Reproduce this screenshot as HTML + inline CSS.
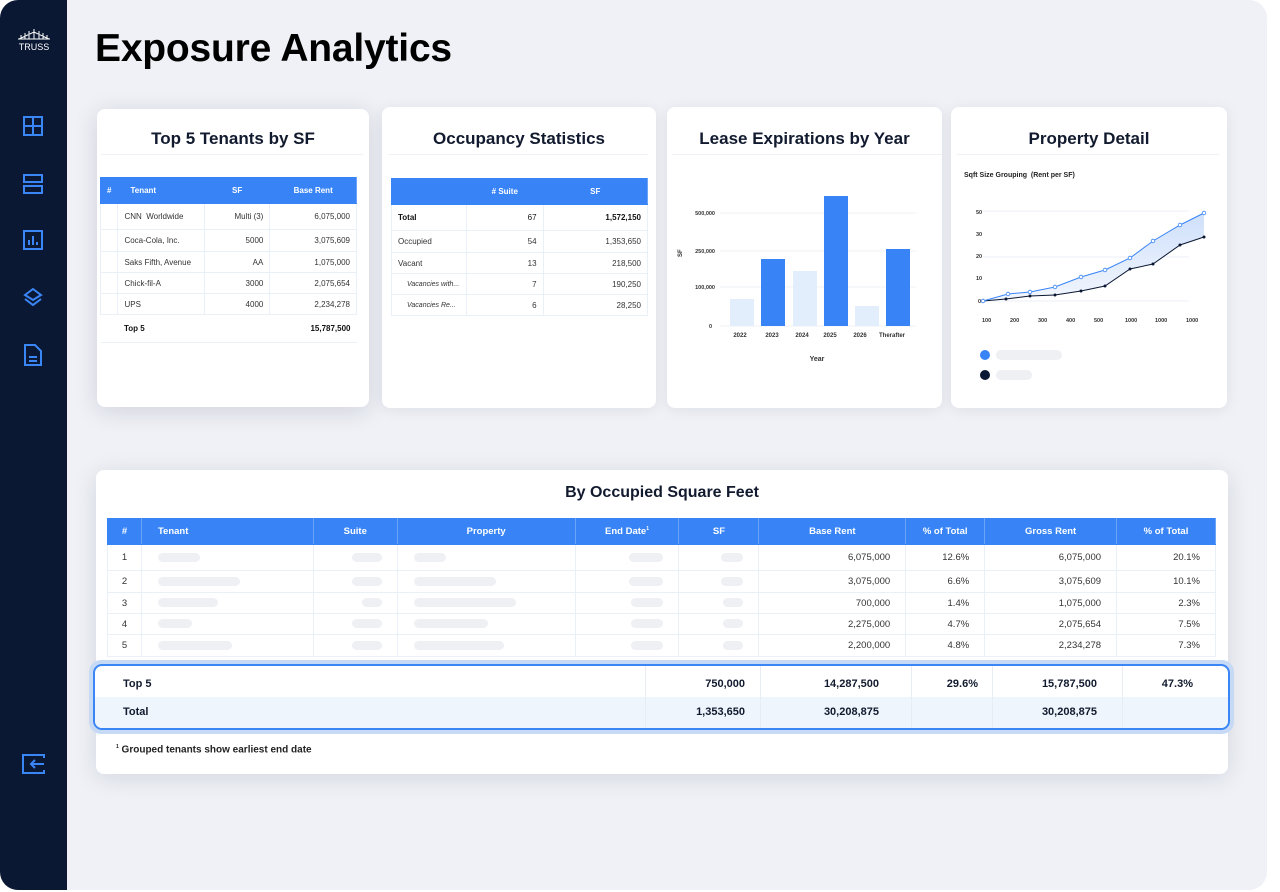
<!DOCTYPE html>
<html><head><meta charset="utf-8"><style>
*{margin:0;padding:0;box-sizing:border-box}
body{width:1280px;height:892px;background:#fff;font-family:"Liberation Sans",sans-serif;color:#0f1a2e;position:relative;overflow:hidden}
.abs{position:absolute}
#main{left:0;top:0;width:1267px;height:890px;background:#eff1f6;border-radius:18px}
#side{left:0;top:0;width:67px;height:890px;background:#0b1833;border-radius:18px 0 0 18px}
.card{position:absolute;background:#fff;border-radius:8px;box-shadow:0 2px 14px rgba(20,30,60,.08)}
.ct{position:absolute;left:0;right:0;text-align:center;font-weight:bold;font-size:17px;color:#111a2e}
.hr{position:absolute;height:1px;background:#eef2f8}
table{border-collapse:collapse;position:absolute;font-size:8px;color:#333}
td,th{border:1px solid #eaf0f8;padding:0 6px;white-space:nowrap}
th{background:#3884f6;color:#fff;font-weight:bold;border-color:#3884f6;border-right:1px solid #6aa3f8}
.r{text-align:right}.c{text-align:center}
.pill{display:inline-block;height:9px;border-radius:5px;background:#eef0f4;vertical-align:middle}
</style></head><body>
<div id="main" class="abs"></div>
<div id="side" class="abs">
  <svg class="abs" style="left:17px;top:28px" width="34" height="24" viewBox="0 0 34 24">
    <g fill="none" stroke="#fff" stroke-width="1"><path d="M2 11 L17 4 L32 11 M4 11 V7 M8 11V5 M12 11V3 M17 11V1 M22 11V3 M26 11V5 M30 11V7 M1 11H33"/></g>
    <text x="17" y="22" fill="#fff" font-size="9" text-anchor="middle" font-family="Liberation Sans">TRUSS</text>
  </svg>
  <svg class="abs" style="left:23px;top:116px" width="20" height="20" viewBox="0 0 20 20" fill="none" stroke="#3a86f7" stroke-width="2"><rect x="1" y="1" width="18" height="18"/><path d="M10 1V19M1 10H19"/></svg>
  <svg class="abs" style="left:23px;top:174px" width="20" height="20" viewBox="0 0 20 20" fill="none" stroke="#3a86f7" stroke-width="2"><rect x="1" y="1" width="18" height="7"/><rect x="1" y="12" width="18" height="7"/></svg>
  <svg class="abs" style="left:23px;top:230px" width="20" height="20" viewBox="0 0 20 20" fill="none" stroke="#3a86f7" stroke-width="2"><rect x="1" y="1" width="18" height="18"/><path d="M6 15V10M10 15V6M14 15V12"/></svg>
  <svg class="abs" style="left:23px;top:287px" width="20" height="20" viewBox="0 0 20 20" fill="none" stroke="#3a86f7" stroke-width="2"><path d="M10 2L18 8L10 13L2 8Z"/><path d="M2 12L10 18L18 12"/></svg>
  <svg class="abs" style="left:24px;top:344px" width="18" height="22" viewBox="0 0 18 22" fill="none" stroke="#3a86f7" stroke-width="2"><path d="M1 1H11L17 7V21H1Z"/><path d="M5 13H13M5 17H13"/></svg>
  <svg class="abs" style="left:22px;top:754px" width="24" height="20" viewBox="0 0 24 20" fill="none" stroke="#3a86f7" stroke-width="2"><path d="M22 4V1H1V19H22V16"/><path d="M22 10H9M13 6L9 10L13 14"/></svg>
</div>
<div class="abs" style="left:95px;top:27px;font-size:39px;font-weight:bold;color:#000;letter-spacing:-0.2px">Exposure Analytics</div>

<div class="card" style="left:97px;top:109px;width:272px;height:298px;box-shadow:0 4px 24px rgba(20,30,60,.14)">
  <div class="ct" style="top:20px">Top 5 Tenants by SF</div>
  <div class="hr" style="left:4px;right:6px;top:45px"></div>
  <table style="left:3px;top:68px;width:257px">
    <tr style="height:26px"><th style="width:14px;border-right:0">#</th><th style="text-align:left;width:87px;border-right:0;padding-left:12px">Tenant</th><th style="width:67px;border-right:0">SF</th><th style="width:89px">Base Rent</th></tr>
    <tr style="height:26px"><td></td><td>CNN&nbsp; Worldwide</td><td class="r">Multi (3)</td><td class="r">6,075,000</td></tr>
    <tr style="height:22px"><td></td><td>Coca-Cola, Inc.</td><td class="r">5000</td><td class="r">3,075,609</td></tr>
    <tr style="height:21px"><td></td><td>Saks Fifth, Avenue</td><td class="r">AA</td><td class="r">1,075,000</td></tr>
    <tr style="height:21px"><td></td><td>Chick-fil-A</td><td class="r">3000</td><td class="r">2,075,654</td></tr>
    <tr style="height:21px"><td></td><td>UPS</td><td class="r">4000</td><td class="r">2,234,278</td></tr>
    <tr style="height:28px;font-weight:bold;color:#111"><td style="border:0;border-bottom:1px solid #eaf0f8"></td><td style="border:0;border-bottom:1px solid #eaf0f8">Top 5</td><td style="border:0;border-bottom:1px solid #eaf0f8"></td><td class="r" style="border:0;border-bottom:1px solid #eaf0f8">15,787,500</td></tr>
  </table>
</div>

<div class="card" style="left:382px;top:107px;width:274px;height:301px">
  <div class="ct" style="top:22px">Occupancy Statistics</div>
  <div class="hr" style="left:6px;right:8px;top:47px"></div>
  <table style="left:9px;top:71px;width:257px">
    <tr style="height:26px"><th style="width:75px;border-right:0"></th><th style="width:77px;border-right:0"># Suite</th><th style="width:105px">SF</th></tr>
    <tr style="height:26px;font-weight:bold;color:#111"><td>Total</td><td class="r" style="font-weight:normal">67</td><td class="r">1,572,150</td></tr>
    <tr style="height:22px"><td>Occupied</td><td class="r">54</td><td class="r">1,353,650</td></tr>
    <tr style="height:21px"><td>Vacant</td><td class="r">13</td><td class="r">218,500</td></tr>
    <tr style="height:21px;font-style:italic"><td style="padding-left:15px;font-size:7px">Vacancies with...</td><td class="r" style="font-style:normal">7</td><td class="r" style="font-style:normal">190,250</td></tr>
    <tr style="height:21px;font-style:italic"><td style="padding-left:15px;font-size:7px">Vacancies Re...</td><td class="r" style="font-style:normal">6</td><td class="r" style="font-style:normal">28,250</td></tr>
  </table>
</div>

<div class="card" style="left:667px;top:107px;width:275px;height:301px">
  <div class="ct" style="top:22px">Lease Expirations by Year</div>
  <div class="hr" style="left:5px;right:0;top:47px"></div>
  <svg class="abs" style="left:0;top:0" width="275" height="301">
    <g stroke="#eef1f6" stroke-width="1"><path d="M53 106H249M53 144H249M53 180H249M53 219H249"/></g>
    <g font-size="5.5" font-weight="bold" fill="#333" font-family="Liberation Sans" text-anchor="end">
      <text x="48" y="108">500,000</text><text x="48" y="146">250,000</text><text x="48" y="182">100,000</text><text x="45" y="221">0</text>
    </g>
    <text x="0" y="0" font-size="6" font-weight="bold" fill="#333" font-family="Liberation Sans" transform="translate(15,150) rotate(-90)">SF</text>
    <rect x="63" y="192" width="24" height="27" fill="#e2eefc"/>
    <rect x="94" y="152" width="24" height="67" fill="#3884f6"/>
    <rect x="126" y="164" width="24" height="55" fill="#e2eefc"/>
    <rect x="157" y="89" width="24" height="130" fill="#3884f6"/>
    <rect x="188" y="199" width="24" height="20" fill="#e2eefc"/>
    <rect x="219" y="142" width="24" height="77" fill="#3884f6"/>
    <g font-size="6" font-weight="bold" fill="#333" font-family="Liberation Sans" text-anchor="middle">
      <text x="73" y="230">2022</text><text x="105" y="230">2023</text><text x="135" y="230">2024</text><text x="163" y="230">2025</text><text x="193" y="230">2026</text><text x="225" y="230">Therafter</text>
      <text x="150" y="254" font-size="7">Year</text>
    </g>
  </svg>
</div>

<div class="card" style="left:951px;top:107px;width:276px;height:301px">
  <div class="ct" style="top:22px">Property Detail</div>
  <div class="hr" style="left:6px;right:8px;top:47px"></div>
  <div class="abs" style="left:13px;top:65px;font-size:7px;font-weight:bold;color:#222">Sqft Size Grouping&nbsp; (Rent per SF)</div>
  <svg class="abs" style="left:0;top:0" width="276" height="301">
    <defs><linearGradient id="g" x1="0" y1="0" x2="0" y2="1"><stop offset="0" stop-color="#cfe0fb"/><stop offset="1" stop-color="#f2f6fd"/></linearGradient></defs>
    <g stroke="#f0f2f6" stroke-width="1.2"><path d="M32 104H238M32 150H238M32 194H238"/></g>
    <g font-size="5.5" font-weight="bold" fill="#333" font-family="Liberation Sans">
      <text x="25" y="107">50</text><text x="25" y="129">30</text><text x="25" y="151">20</text><text x="25" y="173">10</text><text x="27" y="196">0</text>
      <text x="31" y="215">100</text><text x="59" y="215">200</text><text x="87" y="215">300</text><text x="115" y="215">400</text><text x="143" y="215">500</text><text x="174" y="215">1000</text><text x="204" y="215">1000</text><text x="235" y="215">1000</text>
    </g>
    <path d="M32 194L57 187L79 185L104 180L130 170L154 163L179 151L202 134L229 118L253 106L253 130L229 138L202 157L179 162L154 179L130 184L104 188L79 189L55 192Z" fill="url(#g)"/>
    <polyline points="32,194 55,192 79,189 104,188 130,184 154,179 179,162 202,157 229,138 253,130" fill="none" stroke="#0b1833" stroke-width="1"/>
    <g fill="#0b1833"><circle cx="55" cy="192" r="1.5"/><circle cx="79" cy="189" r="1.5"/><circle cx="104" cy="188" r="1.5"/><circle cx="130" cy="184" r="1.5"/><circle cx="154" cy="179" r="1.5"/><circle cx="179" cy="162" r="1.5"/><circle cx="202" cy="157" r="1.5"/><circle cx="229" cy="138" r="1.5"/><circle cx="253" cy="130" r="1.5"/></g>
    <polyline points="32,194 57,187 79,185 104,180 130,170 154,163 179,151 202,134 229,118 253,106" fill="none" stroke="#3884f6" stroke-width="1"/>
    <g fill="#fff" stroke="#3884f6" stroke-width="0.8"><circle cx="32" cy="194" r="1.8"/><circle cx="57" cy="187" r="1.8"/><circle cx="79" cy="185" r="1.8"/><circle cx="104" cy="180" r="1.8"/><circle cx="130" cy="170" r="1.8"/><circle cx="154" cy="163" r="1.8"/><circle cx="179" cy="151" r="1.8"/><circle cx="202" cy="134" r="1.8"/><circle cx="229" cy="118" r="1.8"/><circle cx="253" cy="106" r="1.8"/></g>
    <circle cx="34" cy="248" r="5" fill="#3884f6"/><rect x="45" y="243" width="66" height="10" rx="5" fill="#eef0f4"/>
    <circle cx="34" cy="268" r="5" fill="#0b1833"/><rect x="45" y="263" width="36" height="10" rx="5" fill="#eef0f4"/>
  </svg>
</div>

<div class="card" style="left:96px;top:470px;width:1132px;height:304px;box-shadow:0 4px 24px rgba(20,30,60,.12)">
  <div class="ct" style="top:14px;font-size:16px">By Occupied Square Feet</div>
  <table style="left:11px;top:48px;width:1109px;font-size:9.5px">
    <tr style="height:26px"><th style="width:34px">#</th><th style="width:172px;text-align:left;padding-left:16px">Tenant</th><th style="width:84px">Suite</th><th style="width:178px">Property</th><th style="width:104px">End Date<sup style="font-size:5px">1</sup></th><th style="width:80px">SF</th><th style="width:147px">Base Rent</th><th style="width:79px">% of Total</th><th style="width:132px">Gross Rent</th><th style="width:99px">% of Total</th></tr>
    <tr style="height:26px"><td class="c">1</td><td style="padding-left:16px"><span class="pill" style="width:42px"></span></td><td class="r" style="padding-right:15px"><span class="pill" style="width:30px"></span></td><td style="padding-left:16px"><span class="pill" style="width:32px"></span></td><td class="r" style="padding-right:15px"><span class="pill" style="width:34px"></span></td><td class="r" style="padding-right:15px"><span class="pill" style="width:22px"></span></td><td class="r" style="padding-right:15px">6,075,000</td><td class="r" style="padding-right:15px">12.6%</td><td class="r" style="padding-right:15px">6,075,000</td><td class="r" style="padding-right:15px">20.1%</td></tr>
    <tr style="height:22px"><td class="c">2</td><td style="padding-left:16px"><span class="pill" style="width:82px"></span></td><td class="r" style="padding-right:15px"><span class="pill" style="width:30px"></span></td><td style="padding-left:16px"><span class="pill" style="width:82px"></span></td><td class="r" style="padding-right:15px"><span class="pill" style="width:34px"></span></td><td class="r" style="padding-right:15px"><span class="pill" style="width:22px"></span></td><td class="r" style="padding-right:15px">3,075,000</td><td class="r" style="padding-right:15px">6.6%</td><td class="r" style="padding-right:15px">3,075,609</td><td class="r" style="padding-right:15px">10.1%</td></tr>
    <tr style="height:21px"><td class="c">3</td><td style="padding-left:16px"><span class="pill" style="width:60px"></span></td><td class="r" style="padding-right:15px"><span class="pill" style="width:20px"></span></td><td style="padding-left:16px"><span class="pill" style="width:102px"></span></td><td class="r" style="padding-right:15px"><span class="pill" style="width:32px"></span></td><td class="r" style="padding-right:15px"><span class="pill" style="width:20px"></span></td><td class="r" style="padding-right:15px">700,000</td><td class="r" style="padding-right:15px">1.4%</td><td class="r" style="padding-right:15px">1,075,000</td><td class="r" style="padding-right:15px">2.3%</td></tr>
    <tr style="height:21px"><td class="c">4</td><td style="padding-left:16px"><span class="pill" style="width:34px"></span></td><td class="r" style="padding-right:15px"><span class="pill" style="width:30px"></span></td><td style="padding-left:16px"><span class="pill" style="width:74px"></span></td><td class="r" style="padding-right:15px"><span class="pill" style="width:32px"></span></td><td class="r" style="padding-right:15px"><span class="pill" style="width:20px"></span></td><td class="r" style="padding-right:15px">2,275,000</td><td class="r" style="padding-right:15px">4.7%</td><td class="r" style="padding-right:15px">2,075,654</td><td class="r" style="padding-right:15px">7.5%</td></tr>
    <tr style="height:22px"><td class="c">5</td><td style="padding-left:16px"><span class="pill" style="width:74px"></span></td><td class="r" style="padding-right:15px"><span class="pill" style="width:30px"></span></td><td style="padding-left:16px"><span class="pill" style="width:90px"></span></td><td class="r" style="padding-right:15px"><span class="pill" style="width:32px"></span></td><td class="r" style="padding-right:15px"><span class="pill" style="width:20px"></span></td><td class="r" style="padding-right:15px">2,200,000</td><td class="r" style="padding-right:15px">4.8%</td><td class="r" style="padding-right:15px">2,234,278</td><td class="r" style="padding-right:15px">7.3%</td></tr>
  </table>
  <div class="abs" style="left:20px;top:274px;font-size:10px;font-weight:bold;color:#222"><sup style="font-size:5px">1</sup> Grouped tenants show earliest end date</div>
</div>

<div class="abs" style="left:89px;top:660px;width:1145px;height:74px;border-radius:12px;background:#c6d9f5"></div>
<div class="abs" style="left:93px;top:664px;width:1137px;height:66px;border:2px solid #3a86f7;border-radius:9px;background:#fff;overflow:hidden;font-size:11px;font-weight:bold;color:#111a2e">
  <div class="abs" style="left:0;top:31px;width:100%;height:35px;background:#eef5fd"></div>
  <div class="abs" style="left:550px;top:0;width:1px;height:66px;background:#e8edf4"></div>
  <div class="abs" style="left:665px;top:0;width:1px;height:66px;background:#e8edf4"></div>
  <div class="abs" style="left:816px;top:0;width:1px;height:66px;background:#e8edf4"></div>
  <div class="abs" style="left:897px;top:0;width:1px;height:66px;background:#e8edf4"></div>
  <div class="abs" style="left:1027px;top:0;width:1px;height:66px;background:#e8edf4"></div>
  <div class="abs" style="left:28px;top:12px">Top 5</div>
  <div class="abs" style="left:28px;top:40px">Total</div>
  <div class="abs" style="right:483px;top:12px">750,000</div>
  <div class="abs" style="right:349px;top:12px">14,287,500</div>
  <div class="abs" style="right:250px;top:12px">29.6%</div>
  <div class="abs" style="right:131px;top:12px">15,787,500</div>
  <div class="abs" style="right:35px;top:12px">47.3%</div>
  <div class="abs" style="right:483px;top:40px">1,353,650</div>
  <div class="abs" style="right:349px;top:40px">30,208,875</div>
  <div class="abs" style="right:131px;top:40px">30,208,875</div>
</div>
</body></html>
